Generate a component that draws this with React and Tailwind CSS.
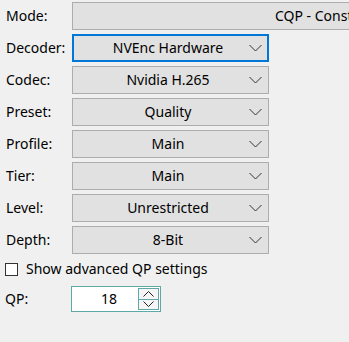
import React from "react";

const Chevron = () => (
  <svg width="13" height="7" viewBox="0 0 13 7" className="shrink-0">
    <path d="M0.5 0.5 L6.5 6.5 L12.5 0.5" fill="none" stroke="#333" strokeWidth="1" />
  </svg>
);

const rows = [
  ["Decoder:", "NVEnc Hardware", true],
  ["Codec:", "Nvidia H.265"],
  ["Preset:", "Quality"],
  ["Profile:", "Main"],
  ["Tier:", "Main"],
  ["Level:", "Unrestricted"],
  ["Depth:", "8-Bit"],
];

function Combo({ value, focused }) {
  return (
    <div
      className={
        "relative flex h-[28px] w-[197px] shrink-0 items-center bg-[#e1e1e1] " +
        (focused ? "border-2 border-[#0078d7]" : "border border-[#adadad]")
      }
    >
      <div className="flex-1 pr-[5px] text-center leading-none">{value}</div>
      <div className={"absolute top-1/2 -translate-y-1/2 " + (focused ? "right-[5px]" : "right-[6px]")}>
        <Chevron />
      </div>
    </div>
  );
}

export default function App() {
  return (
    <div
      className="h-[342px] w-[349px] overflow-hidden bg-[#f0f0f0] pt-[2px] text-[14px] text-black"
      style={{ fontFamily: '"Noto Sans", sans-serif' }}
    >
      <div className="flex flex-col gap-[4px]">
        <div className="flex items-center">
          <div className="w-[72px] shrink-0 pl-[6px] leading-none">Mode:</div>
          <div className="flex h-[28px] w-[400px] shrink-0 items-center border border-[#adadad] bg-[#e1e1e1] pl-[202px] leading-none">
            <span className="whitespace-nowrap">CQP - Constant QP</span>
          </div>
        </div>
        {rows.map(([label, value, focused]) => (
          <div key={label} className="flex items-center">
            <div className="w-[72px] shrink-0 pl-[6px] leading-none">{label}</div>
            <Combo value={value} focused={focused} />
          </div>
        ))}
      </div>
      <div className="mt-[8px] flex items-center gap-[8px] pl-[5px]">
        <div className="h-[13px] w-[13px] shrink-0 border border-[#333] bg-white" />
        <span className="leading-none">Show advanced QP settings</span>
      </div>
      <div className="mt-[10px] flex items-center">
        <div className="w-[71px] shrink-0 pl-[5px] leading-none">QP:</div>
        <div className="flex h-[26px] w-[90px] shrink-0 items-center border border-[#5fa8a8] bg-white">
          <div className="flex-1 pl-[8px] text-center leading-none">18</div>
          <div className="mr-[1px] flex h-[22px] w-[21px] flex-col border border-[#5fa8a8] bg-[#f5f5f5]">
            <div className="flex flex-1 items-center justify-center border-b border-[#5fa8a8]">
              <svg width="11" height="6" viewBox="0 0 11 6">
                <path d="M0.5 5.5 L5.5 0.5 L10.5 5.5" fill="none" stroke="#222" strokeWidth="1" />
              </svg>
            </div>
            <div className="flex flex-1 items-center justify-center">
              <svg width="11" height="6" viewBox="0 0 11 6">
                <path d="M0.5 0.5 L5.5 5.5 L10.5 0.5" fill="none" stroke="#222" strokeWidth="1" />
              </svg>
            </div>
          </div>
        </div>
      </div>
    </div>
  );
}
